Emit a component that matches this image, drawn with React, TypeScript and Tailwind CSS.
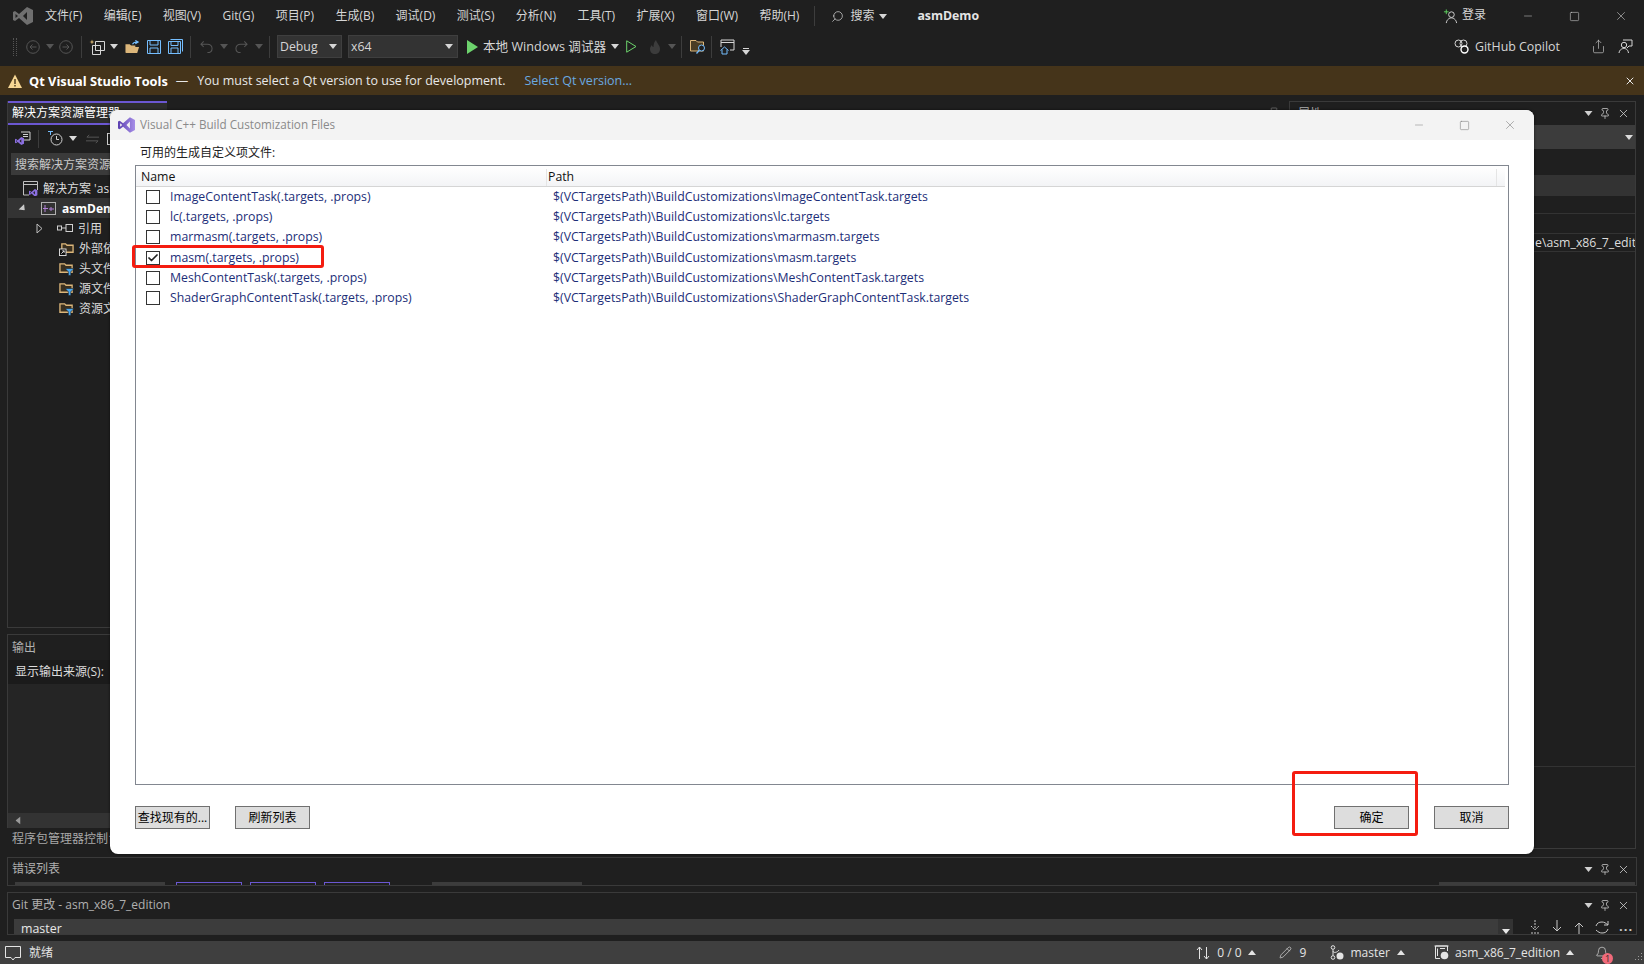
import { Check, X, Minus, Square, Pin, Search, Pencil, Bell, Share } from 'lucide-react';

const menus = ['文件(F)', '编辑(E)', '视图(V)', 'Git(G)', '项目(P)', '生成(B)', '调试(D)', '测试(S)', '分析(N)', '工具(T)', '扩展(X)', '窗口(W)', '帮助(H)'];

const files = [
  ['ImageContentTask(.targets, .props)', 'ImageContentTask.targets'],
  ['lc(.targets, .props)', 'lc.targets'],
  ['marmasm(.targets, .props)', 'marmasm.targets'],
  ['masm(.targets, .props)', 'masm.targets'],
  ['MeshContentTask(.targets, .props)', 'MeshContentTask.targets'],
  ['ShaderGraphContentTask(.targets, .props)', 'ShaderGraphContentTask.targets'],
];

const VS_PATH = 'M14 0 L20 3 V15 L14 18 L6 11 L2 14 L0 13 V5 L2 4 L6 7 Z M2.5 7 V11 L5 9 Z M14 5 L10 9 L14 13 Z';

function VsLogo({ className, fill }: { className: string; fill: string }) {
  return (
    <svg viewBox="0 0 20 18" className={className}>
      <path d={VS_PATH} fill={fill} fillRule="evenodd" />
    </svg>
  );
}

function Caret({ className = '', up = false }: { className?: string; up?: boolean }) {
  return (
    <svg viewBox="0 0 8 5" className={`w-[8px] h-[5px] shrink-0 ${className}`}>
      <path d={up ? 'M0 5 L4 0 L8 5 Z' : 'M0 0 L8 0 L4 5 Z'} fill="currentColor" />
    </svg>
  );
}

function Sep({ className = '' }: { className?: string }) {
  return <div className={`w-px h-[22px] bg-[#3d3d3d] shrink-0 ${className}`} />;
}

function PanelControls() {
  return (
    <div className="flex items-center gap-[6px] text-[#d0d0d0]">
      <Caret className="w-[9px]" />
      <Pin className="w-[12px] h-[13px]" strokeWidth={1.5} />
      <X className="w-[13px] h-[13px]" strokeWidth={1.5} />
    </div>
  );
}

function FolderFilter() {
  return (
    <svg viewBox="0 0 16 16" className="w-[15px] h-[15px] shrink-0">
      <path d="M1 3 H6 L7.5 4.5 H14 V12 H1 Z" fill="#3a3020" stroke="#dcb67a" strokeWidth="1.4" />
      <path d="M6.5 8 H16 L12.6 11.5 V15.5 H10 V11.5 Z" fill="#4aa8f0" stroke="#1f1f1f" strokeWidth="0.6" />
    </svg>
  );
}

function FolderLink() {
  return (
    <svg viewBox="0 0 16 16" className="w-[15px] h-[15px] shrink-0">
      <path d="M3 3 H7 L8.5 4.5 H15 V12 H3 Z" fill="#3a3020" stroke="#dcb67a" strokeWidth="1.4" />
      <rect x="0.5" y="8.5" width="7" height="7" fill="#111111" stroke="#e0e0e0" />
      <path d="M2.5 13.5 L5.5 10.5 M3.5 10.5 H5.5 V12.5" fill="none" stroke="#e0e0e0" />
    </svg>
  );
}

function TreeRow({ left, icon, label, bold, active, gap = 'ml-[6px]' }: { left: string; icon: React.ReactNode; label: string; bold?: boolean; active?: boolean; gap?: string }) {
  return (
    <div className={`h-[20px] flex items-center whitespace-nowrap ${left} ${active ? 'bg-[#333333]' : ''} ${bold ? 'font-bold text-white' : 'text-[#dcdcdc]'}`}>
      {icon}
      <span className={`${gap} pt-[2px]`}>{label}</span>
    </div>
  );
}

function DialogButton({ label }: { label: string }) {
  return (
    <button className="w-[75px] h-[23px] bg-[#dddddd] border border-[#707070] text-[12px] text-black flex items-center justify-center">
      {label}
    </button>
  );
}

function TitleBar() {
  return (
    <div className="h-[32px] flex items-center shrink-0 text-[#d6d6d6]">
      <VsLogo className="w-[20px] h-[18px] ml-[13px] shrink-0" fill="#6f6f6f" />
      <div className="flex items-center gap-[21.4px] ml-[12px] whitespace-nowrap">
        {menus.map((m) => (
          <span key={m}>{m}</span>
        ))}
      </div>
      <div className="w-px h-[20px] bg-[#3d3d3d] ml-[15px]" />
      <Search className="w-[13px] h-[13px] ml-[16px] -scale-x-100" strokeWidth={1.3} />
      <span className="ml-[6px]">搜索</span>
      <Caret className="ml-[5px] w-[6px]" />
      <span className="ml-[30px] font-bold text-[#e4e4e4] text-[12.3px]">asmDemo</span>
      <div className="ml-auto flex items-center">
        <svg viewBox="0 0 16 16" className="w-[15px] h-[15px]">
          <path d="M1 3 H6 M3.5 0.5 V5.5" stroke="#5fd35f" strokeWidth="1" />
          <circle cx="9" cy="6" r="3" fill="none" stroke="#d6d6d6" />
          <path d="M3.5 15 C4 11 7 9.5 9 9.5 C11 9.5 14 11 14.5 15" fill="none" stroke="#d6d6d6" />
        </svg>
        <span className="ml-[4px] mr-[36px] -mt-[2px]">登录</span>
        <Minus className="w-[12px] h-[12px]" strokeWidth={1} />
        <Square className="w-[11px] h-[11px] ml-[35px]" strokeWidth={1.2} />
        <X className="w-[14px] h-[14px] ml-[34px] mr-[16px]" strokeWidth={1} />
      </div>
    </div>
  );
}

function Toolbar() {
  return (
    <div className="h-[34px] pb-[5px] flex items-center shrink-0 text-[#d6d6d6]">
      <div className="ml-[13px] w-[4px] h-[18px] border-x border-dotted border-[#555555]" />
      <svg viewBox="0 0 14 14" className="w-[14px] h-[14px] ml-[9px]">
        <circle cx="7" cy="7" r="6.3" fill="none" stroke="#555555" />
        <path d="M10.5 7 H4 M6.5 4.5 L4 7 L6.5 9.5" fill="none" stroke="#555555" />
      </svg>
      <Caret className="ml-[6px] w-[6px] text-[#555555]" />
      <svg viewBox="0 0 14 14" className="w-[14px] h-[14px] ml-[5px]">
        <circle cx="7" cy="7" r="6.3" fill="none" stroke="#555555" />
        <path d="M3.5 7 H10 M7.5 4.5 L10 7 L7.5 9.5" fill="none" stroke="#555555" />
      </svg>
      <Sep className="ml-[8px]" />
      <svg viewBox="0 0 16 16" className="w-[16px] h-[16px] ml-[7px]">
        <path d="M3 0.5 L3.6 2.4 L5.5 3 L3.6 3.6 L3 5.5 L2.4 3.6 L0.5 3 L2.4 2.4 Z" fill="#e8c37a" />
        <path d="M6.5 2.5 H15.5 V11.5 H6.5 Z M3.5 6.5 H11.5 V15.5 H3.5 Z" fill="#1f1f1f" stroke="#d6d6d6" />
      </svg>
      <Caret className="ml-[5px] w-[6px]" />
      <svg viewBox="0 0 16 14" className="w-[15px] h-[14px] ml-[7px]">
        <path d="M0.5 4 H5 L6.5 5.5 H11 V7 H4 L2 13 H0.5 Z" fill="#dcb67a" />
        <path d="M3 7 H15 L13 13.5 H1 Z" fill="#dcb67a" />
        <path d="M8 4 C9 2 10.5 1.7 13 1.7 M11 0 L14 1.7 L11 3.5" fill="none" stroke="#75beff" strokeWidth="1.2" />
      </svg>
      <svg viewBox="0 0 14 14" className="w-[14px] h-[14px] ml-[7px]">
        <path d="M0.5 0.5 H13.5 V13.5 H0.5 Z M3 0.5 V5 H11 V0.5 M3 13.5 V8 H11 V13.5" fill="none" stroke="#75beff" />
      </svg>
      <svg viewBox="0 0 15 15" className="w-[15px] h-[15px] ml-[7px]">
        <path d="M2.5 0.5 H14.5 V12.5 M0.5 2.5 H12.5 V14.5 H0.5 Z M3 2.5 V6.5 H10 V2.5 M3 14.5 V9 H10 V14.5" fill="none" stroke="#75beff" />
      </svg>
      <Sep className="ml-[7px]" />
      <svg viewBox="0 0 14 14" className="w-[13px] h-[14px] ml-[9px]">
        <path d="M4 1 L1 4 L4 7 M1 4 H8 C11 4 13 6 13 8.5 C13 11 11 13 8 13" fill="none" stroke="#555555" strokeWidth="1.1" />
      </svg>
      <Caret className="ml-[7px] w-[6px] text-[#555555]" />
      <svg viewBox="0 0 14 14" className="w-[13px] h-[14px] ml-[7px]">
        <path d="M10 1 L13 4 L10 7 M13 4 H6 C3 4 1 6 1 8.5 C1 11 3 13 6 13" fill="none" stroke="#555555" strokeWidth="1.1" />
      </svg>
      <Caret className="ml-[7px] w-[6px] text-[#555555]" />
      <Sep className="ml-[6px]" />
      <div className="ml-[7px] w-[65px] h-[23px] bg-[#333333] border border-[#3f3f3f] flex items-center pl-[2px] pr-[4px] justify-between text-[12.3px]">
        <span>Debug</span>
        <Caret className="w-[5px]" />
      </div>
      <div className="ml-[6px] w-[110px] h-[23px] bg-[#333333] border border-[#3f3f3f] flex items-center pl-[2px] pr-[4px] justify-between text-[12.3px]">
        <span>x64</span>
        <Caret className="w-[5px]" />
      </div>
      <svg viewBox="0 0 11 14" className="w-[11px] h-[14px] ml-[9px]">
        <path d="M0 0 L11 7 L0 14 Z" fill="#6dd36d" />
      </svg>
      <span className="ml-[5px] whitespace-nowrap text-[12.6px]">本地 Windows 调试器</span>
      <Caret className="ml-[5px] w-[6px]" />
      <svg viewBox="0 0 11 13" className="w-[11px] h-[13px] ml-[7px]">
        <path d="M0.7 0.8 L10 6.5 L0.7 12.2 Z" fill="none" stroke="#6dd36d" />
      </svg>
      <svg viewBox="0 0 12 14" className="w-[12px] h-[14px] ml-[12px]">
        <path d="M7 0 C7.5 3 11 5 11 9 C11 12 9 14 6 14 C3 14 1 12 1 9 C1 7 2 6 3 5 C3 6.5 4 7 4.5 7 C4.5 4.5 5 2 7 0 Z" fill="#3c3c3c" />
      </svg>
      <Caret className="ml-[7px] w-[6px] text-[#555555]" />
      <Sep className="ml-[5px]" />
      <svg viewBox="0 0 16 15" className="w-[16px] h-[15px] ml-[8px]">
        <path d="M0.5 1.5 H6 L7.5 3 H13.5 V12 H0.5 Z" fill="#4a3d24" stroke="#dcb67a" />
        <circle cx="11.5" cy="9" r="3" fill="#1f1f1f" stroke="#75beff" />
        <path d="M9.3 11.3 L6.5 14.5" stroke="#75beff" strokeWidth="1.3" />
      </svg>
      <Sep className="ml-[5px]" />
      <svg viewBox="0 0 15 16" className="w-[15px] h-[16px] ml-[8px]">
        <path d="M1 8 V1 H14 V11 H10 M1 3.5 H14" fill="none" stroke="#d6d6d6" />
        <path d="M0.5 11.5 L4.5 8 L8.5 11.5 M2 10.5 V15 H7 V10.5" fill="none" stroke="#75beff" />
      </svg>
      <div className="ml-[7px] mt-[9px] flex flex-col items-center gap-[1px]">
        <div className="w-[6px] h-px bg-[#d6d6d6]" />
        <Caret className="w-[6px]" />
      </div>
      <div className="ml-auto flex items-center">
        <svg viewBox="0 0 15 15" className="w-[15px] h-[15px]">
          <circle cx="4.5" cy="4.5" r="3.5" fill="none" stroke="#d6d6d6" />
          <circle cx="9.5" cy="4.5" r="3.5" fill="none" stroke="#d6d6d6" />
          <circle cx="10.5" cy="10.5" r="3.5" fill="#1f1f1f" stroke="#ffffff" strokeWidth="1.4" />
        </svg>
        <span className="ml-[6px] whitespace-nowrap text-[12.4px]">GitHub Copilot</span>
        <Share className="w-[15px] h-[15px] ml-[31px]" strokeWidth={1} />
        <svg viewBox="0 0 15 15" className="w-[15px] h-[15px] ml-[12px] mr-[11px]">
          <path d="M5 1 H14 V7 H11 L9 9" fill="none" stroke="#d6d6d6" />
          <circle cx="6" cy="6" r="2.7" fill="#1f1f1f" stroke="#d6d6d6" />
          <path d="M1 14 C1.5 10.5 4 9.5 6 9.5 C8 9.5 10 10.5 10.5 14" fill="none" stroke="#d6d6d6" />
        </svg>
      </div>
    </div>
  );
}

function QtBar() {
  return (
    <div className="h-[29px] bg-[#45341a] flex items-center shrink-0 text-[#e8e8e8] whitespace-nowrap text-[12.5px]">
      <svg viewBox="0 0 14 14" className="w-[14px] h-[14px] ml-[8px]">
        <path d="M7 0.5 L14 14 H0 Z" fill="#f7d794" />
        <path d="M7 5 V10 M7 11 V12.5" stroke="#45341a" strokeWidth="1.4" />
      </svg>
      <span className="ml-[7px] font-bold text-white text-[12.8px]">Qt Visual Studio Tools</span>
      <span className="ml-[8px]">—</span>
      <span className="ml-[9px]">You must select a Qt version to use for development.</span>
      <span className="ml-[19px] text-[#6aa9e0]">Select Qt version...</span>
      <X className="w-[12px] h-[12px] ml-auto mr-[8px]" strokeWidth={2} />
    </div>
  );
}

function LeftColumn() {
  return (
    <div className="w-[600px] shrink-0 pl-[7px] pt-[6px] flex flex-col text-[#dcdcdc]">
      <div className="h-[527px] border-l border-b border-[#3a3a3a] flex flex-col overflow-hidden">
        <div className="w-[159px] h-[24px] border-y-2 border-[#6b57d2] bg-[#2d2d2d] pl-[4px] flex items-center text-white whitespace-nowrap">
          解决方案资源管理器
        </div>
        <div className="h-[27px] flex items-center pl-[7px]">
          <svg viewBox="0 0 16 15" className="w-[16px] h-[15px]">
            <path d="M6 1 H15 V9 H9 M8 3.5 H13 M8 5.5 H13" fill="none" stroke="#d0d0d0" />
            <path d={VS_PATH} fill="#8b6fe0" fillRule="evenodd" transform="translate(0 6) scale(0.45)" />
          </svg>
          <div className="w-px h-[18px] bg-[#3d3d3d] ml-[7px]" />
          <svg viewBox="0 0 15 15" className="w-[15px] h-[15px] ml-[9px]">
            <circle cx="8.5" cy="8.5" r="5.5" fill="none" stroke="#d0d0d0" />
            <path d="M8.5 5 V8.5 H11" fill="none" stroke="#d0d0d0" />
            <path d="M0 0.5 H5 M2.5 0.5 V4" stroke="#75beff" />
          </svg>
          <Caret className="ml-[6px] w-[6px]" />
          <svg viewBox="0 0 14 10" className="w-[13px] h-[10px] ml-[9px]">
            <path d="M14 3 H1 L3.5 0.5 M0 7 H13 L10.5 9.5" fill="none" stroke="#5a5a5a" />
          </svg>
          <div className="w-[12px] h-[12px] border border-[#d0d0d0] ml-[8px]" />
        </div>
        <div className="h-[22px] mt-[1px] ml-[3px] bg-[#3a3a3a] flex items-center pl-[4px] pt-[2px] text-[#c8c8c8] whitespace-nowrap">搜索解决方案资源管理器</div>
        <div className="mt-[3px]">
          <TreeRow
            left="pl-[15px]"
            gap="ml-[5px]"
            label="解决方案 'asmDemo'"
            icon={
              <svg viewBox="0 0 15 15" className="w-[15px] h-[15px] shrink-0">
                <path d="M6 14 H0.5 V0.5 H14.5 V9 M1 3.5 H14" fill="none" stroke="#c0c0c0" />
                <path d={VS_PATH} fill="#8b6fe0" fillRule="evenodd" transform="translate(6 8) scale(0.42)" />
              </svg>
            }
          />
          <TreeRow
            left="pl-[11px]"
            bold
            active
            label="asmDemo"
            icon={
              <>
                <Caret className="w-[7px] rotate-[-45deg] text-[#c8c8c8]" />
                <svg viewBox="0 0 15 13" className="w-[15px] h-[13px] ml-[14px] shrink-0">
                  <rect x="0.5" y="0.5" width="14" height="12" fill="none" stroke="#b0b0b0" />
                  <path d="M4 3 V10 M2 6.5 H7 M10 5 V9 M8 7 H13" stroke="#b180d7" />
                </svg>
              </>
            }
          />
          <TreeRow
            left="pl-[28px]"
            label="引用"
            icon={
              <>
                <svg viewBox="0 0 7 11" className="w-[7px] h-[11px] shrink-0">
                  <path d="M1 1 L6 5.5 L1 10 Z" fill="none" stroke="#c0c0c0" />
                </svg>
                <svg viewBox="0 0 16 8" className="w-[16px] h-[8px] ml-[14px] shrink-0 mr-[-1px]">
                  <rect x="0.5" y="2" width="4" height="4" fill="none" stroke="#d0d0d0" />
                  <path d="M4.5 4 H9" stroke="#d0d0d0" />
                  <rect x="9" y="0.5" width="6.5" height="7" fill="none" stroke="#d0d0d0" />
                </svg>
              </>
            }
          />
          <TreeRow left="pl-[51px]" gap="ml-[5px]" label="外部依赖项" icon={<FolderLink />} />
          <TreeRow left="pl-[51px]" gap="ml-[5px]" label="头文件" icon={<FolderFilter />} />
          <TreeRow left="pl-[51px]" gap="ml-[5px]" label="源文件" icon={<FolderFilter />} />
          <TreeRow left="pl-[51px]" gap="ml-[5px]" label="资源文件" icon={<FolderFilter />} />
        </div>
      </div>
      <div className="h-[194px] mt-[6px] border-l border-t border-[#3a3a3a] flex flex-col">
        <div className="h-[25px] flex items-center pl-[4px] text-[#b0b0b0]">输出</div>
        <div className="h-[24px] bg-[#1b1b1b] flex items-center pl-[7px]">显示输出来源(S):</div>
        <div className="flex-1 bg-[#252525]" />
        <div className="h-[15px] bg-[#333333] flex items-center pl-[6px]">
          <Caret className="w-[8px] rotate-90 text-[#999999]" />
        </div>
      </div>
      <div className="h-[21px] flex items-center pl-[5px] text-[#a8a8a8] whitespace-nowrap">程序包管理器控制台</div>
    </div>
  );
}

function RightColumn() {
  return (
    <div className="w-[347px] mr-[8px] shrink-0 pt-[6px] pb-[8px] flex flex-col">
      <div className="flex-1 border border-[#3a3a3a] flex flex-col text-[#dcdcdc] overflow-hidden">
        <div className="h-[23px] flex items-center justify-between pl-[8px] pr-[5px] shrink-0">
          <span className="text-[#b0b0b0]">属性</span>
          <PanelControls />
        </div>
        <div className="h-[24px] bg-[#3c3c3c] flex items-center justify-end pr-[2px] shrink-0">
          <Caret className="w-[6px]" />
        </div>
        <div className="h-[26px] shrink-0" />
        <div className="h-[21px] bg-[#333333] shrink-0" />
        <div className="h-[18px] border-b border-[#333333] shrink-0" />
        <div className="h-[19px] shrink-0" />
        <div className="h-[19px] border-y border-[#333333] pl-[245px] flex items-center whitespace-nowrap shrink-0 text-[12.3px]">e\asm_x86_7_edition</div>
        <div className="h-[515px] border-b border-[#333333]" />
      </div>
    </div>
  );
}

function BottomPanels() {
  return (
    <div className="mx-[7px] shrink-0">
      <div className="h-[29px] border border-[#3a3a3a] relative overflow-hidden">
        <div className="h-[22px] mb-[2px] flex items-center justify-between pl-[4px] pr-[6px] text-[#b0b0b0]">
          <span>错误列表</span>
          <PanelControls />
        </div>
        <div className="flex h-[3px] pl-[7px]">
          <div className="w-[150px] bg-[#3c3c3c]" />
          <div className="w-[66px] ml-[11px] border-t border-x border-[#6b57d2]" />
          <div className="w-[66px] ml-[8px] border-t border-x border-[#6b57d2]" />
          <div className="w-[66px] ml-[8px] border-t border-x border-[#6b57d2]" />
          <div className="w-[150px] ml-[42px] bg-[#3c3c3c]" />
          <div className="w-[196px] ml-auto mr-[1px] bg-[#3c3c3c]" />
        </div>
      </div>
      <div className="h-[43px] mt-[6px] border border-[#3a3a3a] overflow-hidden">
        <div className="h-[24px] mb-[2px] flex items-center justify-between pl-[4px] pr-[6px] text-[#b0b0b0] text-[12px]">
          <span>Git 更改 - asm_x86_7_edition</span>
          <PanelControls />
        </div>
        <div className="flex h-[16px]">
          <div className="ml-[6px] w-[1484px] bg-[#3c3c3c] text-[#e8e8e8] pl-[7px] pt-[2px] leading-[16px] flex justify-between overflow-hidden text-[12.4px]">
            <span>master</span>
          </div>
          <div className="w-[15px] bg-[#333333] flex items-end justify-center pb-[1px] text-[#e8e8e8]">
            <Caret />
          </div>
          <div className="ml-[16px] flex items-center gap-[10px] text-[#c8c8c8]">
            <svg viewBox="0 0 12 14" className="w-[12px] h-[14px]"><path d="M6 0 V9 M2 6 L6 10 L10 6 M2 13 H10" fill="none" stroke="currentColor" strokeDasharray="2 1" /></svg>
            <svg viewBox="0 0 12 14" className="w-[12px] h-[14px]"><path d="M6 0 V11 M2 7 L6 11 L10 7" fill="none" stroke="currentColor" /></svg>
            <svg viewBox="0 0 12 14" className="w-[12px] h-[14px]"><path d="M6 14 V3 M2 7 L6 3 L10 7" fill="none" stroke="currentColor" /></svg>
            <svg viewBox="0 0 14 14" className="w-[14px] h-[14px]"><path d="M1 6 C2 3 4 2 7 2 C9 2 11 3 13 5 M13 1 V5 H9 M13 9 C12 12 10 13 7 13 C5 13 3 12 1 10" fill="none" stroke="currentColor" /></svg>
            <span className="text-[13px] leading-none font-bold tracking-[1px] -mt-[2px]">...</span>
          </div>
        </div>
      </div>
    </div>
  );
}

function StatusBar() {
  return (
    <div className="h-[23px] mt-[6px] bg-[#3f3f3f] flex items-center shrink-0 text-[#e4e4e4] whitespace-nowrap text-[12px]">
      <svg viewBox="0 0 16 16" className="w-[16px] h-[16px] ml-[5px]">
        <path d="M0.5 1.5 H15.5 V12.5 H10 L8 15 L6 12.5 H0.5 Z" fill="none" stroke="#e4e4e4" />
      </svg>
      <span className="ml-[8px]">就绪</span>
      <div className="ml-auto flex items-center">
        <svg viewBox="0 0 14 14" className="w-[14px] h-[14px]">
          <path d="M3.5 13 V1 M1 4 L3.5 1 L6 4 M10.5 1 V13 M8 10 L10.5 13 L13 10" fill="none" stroke="#e4e4e4" />
        </svg>
        <span className="ml-[7px]">0 / 0</span>
        <Caret up className="ml-[6px]" />
        <Pencil className="w-[13px] h-[13px] ml-[23px]" strokeWidth={1.2} />
        <span className="ml-[8px]">9</span>
        <svg viewBox="0 0 14 15" className="w-[14px] h-[15px] ml-[24px]">
          <circle cx="3" cy="2.5" r="1.8" fill="none" stroke="#e4e4e4" />
          <circle cx="3" cy="12.5" r="1.8" fill="none" stroke="#e4e4e4" />
          <path d="M3 4.5 V10.5 M3 6 C3 8 7 8 9 5" fill="none" stroke="#e4e4e4" />
          <circle cx="10" cy="11" r="3.5" fill="#e4e4e4" />
        </svg>
        <span className="ml-[6px]">master</span>
        <Caret up className="ml-[7px]" />
        <svg viewBox="0 0 15 15" className="w-[15px] h-[15px] ml-[29px]">
          <path d="M6 13.5 H1.5 V1 H13.5 V6 M0.5 1 H14.5 M3.5 3.5 V11 M6 3.5 H11" fill="none" stroke="#e4e4e4" />
          <circle cx="10.5" cy="10.5" r="3.8" fill="#e4e4e4" />
        </svg>
        <span className="ml-[6px]">asm_x86_7_edition</span>
        <Caret up className="ml-[6px]" />
        <span className="relative ml-[21px]">
          <Bell className="w-[14px] h-[14px]" strokeWidth={1.1} />
          <span className="absolute left-[7px] top-[7px] w-[11px] h-[11px] rounded-full bg-[#f06a7a] text-[9px] leading-[11px] text-center text-[#2a2a2a]">1</span>
        </span>
        <svg viewBox="0 0 10 10" className="w-[10px] h-[10px] ml-[24px] mr-[1px] mt-[8px]">
          <path d="M8 1 H9 V2 H8 Z M5 4 H6 V5 H5 Z M8 4 H9 V5 H8 Z M2 7 H3 V8 H2 Z M5 7 H6 V8 H5 Z M8 7 H9 V8 H8 Z" fill="#9a9a9a" />
        </svg>
      </div>
    </div>
  );
}

function CustomizationDialog() {
  return (
    <div className="absolute left-[110px] top-[110px] w-[1424px] h-[744px] rounded-[8px] bg-white overflow-hidden flex flex-col shadow-[0_0_3px_rgba(0,0,0,0.6)] text-black">
      <div className="h-[30px] bg-[#f3f3f3] flex items-center shrink-0">
        <svg viewBox="0 0 20 18" className="w-[17px] h-[16px] ml-[8px]">
          <defs>
            <linearGradient id="vsLogo" x1="0" x2="1" y1="0" y2="0">
              <stop offset="0" stopColor="#5a3fb0" />
              <stop offset="1" stopColor="#a78fe8" />
            </linearGradient>
          </defs>
          <path d={VS_PATH} fill="url(#vsLogo)" fillRule="evenodd" />
        </svg>
        <span className="ml-[5px] pb-[2px] text-[#8a8a8a] text-[11.7px]">Visual C++ Build Customization Files</span>
        <div className="ml-auto flex items-center text-[#7a7a7a]">
          <Minus className="w-[12px] h-[12px]" strokeWidth={1} />
          <Square className="w-[11px] h-[11px] ml-[34px]" strokeWidth={1.2} />
          <X className="w-[14px] h-[14px] ml-[33px] mr-[17px]" strokeWidth={1} />
        </div>
      </div>
      <div className="h-[25px] pl-[30px] flex items-center shrink-0 text-[#222222]">可用的生成自定义项文件:</div>
      <div className="h-[620px] mx-[25px] border border-[#828790] shrink-0 flex flex-col">
        <div className="h-[21px] mr-[3px] grid grid-cols-[411px_950px_1fr] bg-gradient-to-b from-white to-[#f3f4f6] border-b border-[#d5d5d5] shrink-0 pt-[3px] text-[#111111] text-[12.3px]">
          <span className="pl-[5px] border-r border-[#e5e5e5]">Name</span>
          <span className="pl-[1px] border-r border-[#e5e5e5]">Path</span>
          <span />
        </div>
        {files.map(([name, target]) => (
          <div key={name} className="h-[20.2px] grid grid-cols-[411px_1fr] items-center text-[#1c2e78] whitespace-nowrap text-[12.3px]">
            <div className="flex items-center pl-[10px]">
              <span className="w-[14px] h-[14px] border border-[#333333] flex items-center justify-center shrink-0">
                {name.startsWith('masm') && <Check className="w-[12px] h-[12px] text-[#222222]" strokeWidth={3.5} />}
              </span>
              <span className="ml-[10px]">{name}</span>
            </div>
            <span className="pl-[6px]">{`$(VCTargetsPath)\\BuildCustomizations\\${target}`}</span>
          </div>
        ))}
      </div>
      <div className="mt-[21px] px-[25px] flex items-center">
        <DialogButton label="查找现有的..." />
        <div className="ml-[25px]">
          <DialogButton label="刷新列表" />
        </div>
        <div className="ml-auto flex gap-[25px]">
          <DialogButton label="确定" />
          <DialogButton label="取消" />
        </div>
      </div>
    </div>
  );
}

export default function App() {
  return (
    <div className="relative w-[1644px] h-[964px] overflow-hidden bg-[#1f1f1f] flex flex-col text-[12px] leading-[16px] font-['Open_Sans','Noto_Sans_CJK_SC',sans-serif]">
      <TitleBar />
      <Toolbar />
      <QtBar />
      <div className="h-[762px] flex shrink-0">
        <LeftColumn />
        <div className="flex-1 flex justify-end pt-[12px] pr-[9px] text-[#777777]">
          <Pin className="w-[12px] h-[12px]" strokeWidth={1.5} />
        </div>
        <RightColumn />
      </div>
      <BottomPanels />
      <StatusBar />

      <CustomizationDialog />

      {/* red annotations from the screenshot */}
      <div className="absolute left-[132px] top-[245px] w-[192px] h-[23px] border-[3px] border-[#f41c10] rounded-[3px]" />
      <div className="absolute left-[1292px] top-[771px] w-[126px] h-[65px] border-[3px] border-[#f41c10] rounded-[3px]" />
    </div>
  );
}
